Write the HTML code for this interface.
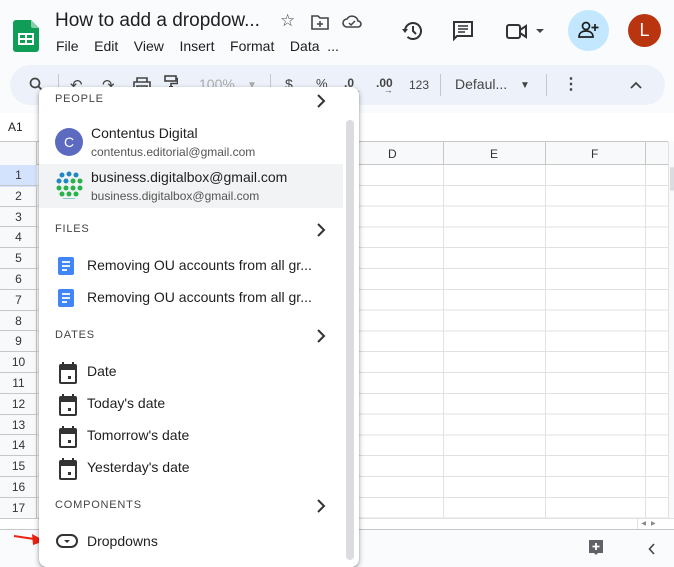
<!DOCTYPE html>
<html><head><meta charset="utf-8"><style>
*{margin:0;padding:0;box-sizing:border-box}
body{width:674px;height:565px;overflow:hidden;background:#f9fbfd;font-family:"Liberation Sans",Arial,sans-serif;position:relative;color:#1f1f1f}
.a{position:absolute}
.rh{position:absolute;left:0;width:37px;text-align:center;font-size:12px;color:#333;border-bottom:1px solid #c7c7c7}
.menu{position:absolute;left:39px;top:87px;width:320px;height:480px;background:#fff;border-radius:8px;box-shadow:0 2px 6px rgba(0,0,0,.3),0 1px 2px rgba(0,0,0,.2)}
.sec{position:absolute;left:16px;font-size:11px;letter-spacing:.8px;color:#444;font-weight:500}
.chev{position:absolute;left:276px;width:12px;height:14px}
.it{position:absolute;left:48px;font-size:14px;color:#1f1f1f;white-space:nowrap}
.tb{position:absolute;top:76px;font-size:13px;color:#444}
</style></head><body>
<svg class="a" style="left:13px;top:20px" width="26" height="32" viewBox="0 0 26 32"><path d="M0 3a3 3 0 0 1 3-3h15l8 8v21a3 3 0 0 1-3 3H3a3 3 0 0 1-3-3z" fill="#0f9d58"/><path d="M18 0l8 8h-6a2 2 0 0 1-2-2z" fill="#87ceac"/><rect x="5" y="13" width="16" height="12" fill="#fff"/><rect x="7" y="15" width="5" height="3" fill="#0f9d58"/><rect x="14" y="15" width="5" height="3" fill="#0f9d58"/><rect x="7" y="20" width="5" height="3" fill="#0f9d58"/><rect x="14" y="20" width="5" height="3" fill="#0f9d58"/></svg>
<div class="a" style="left:55px;top:10px;font-size:19px;color:#1f1f1f">How to add a dropdow...</div>
<div class="a" style="left:56px;top:38px;font-size:14px;color:#1f1f1f;word-spacing:0">File&nbsp;&nbsp;&nbsp;&nbsp;Edit&nbsp;&nbsp;&nbsp;&nbsp;View&nbsp;&nbsp;&nbsp;&nbsp;Insert&nbsp;&nbsp;&nbsp;&nbsp;Format&nbsp;&nbsp;&nbsp;&nbsp;Data&nbsp;&nbsp;...</div>
<div class="a" style="left:280px;top:11px;font-size:17px;color:#444">☆</div>
<svg class="a" style="left:311px;top:14px" width="18" height="16" viewBox="0 0 18 16"><path d="M1 2h6l2 2h8v11H1z" fill="none" stroke="#444" stroke-width="1.6"/><path d="M9 7v6M6 10h6" stroke="#444" stroke-width="1.5"/></svg>
<svg class="a" style="left:342px;top:14px" width="20" height="15" viewBox="0 0 20 15"><path d="M5 13a4 4 0 0 1 0-8 6 6 0 0 1 11 2 3 3 0 0 1 0 6z" fill="none" stroke="#444" stroke-width="1.6"/><path d="M7 9l2 2 4-4" fill="none" stroke="#444" stroke-width="1.5"/></svg>
<svg class="a" style="left:401px;top:19px" width="24" height="24" viewBox="0 0 24 24"><path d="M4 12a8 8 0 1 1 2.5 5.8" fill="none" stroke="#333" stroke-width="2"/><path d="M1 10l3 4 3-4z" fill="#333"/><path d="M12 7v5l3 3" fill="none" stroke="#333" stroke-width="2"/></svg>
<svg class="a" style="left:452px;top:20px" width="22" height="22" viewBox="0 0 22 22"><path d="M2 2h18v14H5l-3 3z" fill="none" stroke="#333" stroke-width="2"/><path d="M6 6h10M6 9h10M6 12h7" stroke="#333" stroke-width="1.6"/></svg>
<svg class="a" style="left:505px;top:21px" width="40" height="20" viewBox="0 0 40 20"><rect x="2" y="4" width="13" height="13" rx="2" fill="none" stroke="#333" stroke-width="2"/><path d="M15 9l6-4v11l-6-4" fill="none" stroke="#333" stroke-width="2"/><path d="M31 8l4 4 4-4z" fill="#444"/></svg>
<div class="a" style="left:568px;top:10px;width:41px;height:41px;border-radius:50%;background:#c2e7ff"></div>
<svg class="a" style="left:578px;top:20px" width="22" height="20" viewBox="0 0 22 20"><circle cx="8" cy="6" r="3.5" fill="none" stroke="#1f1f1f" stroke-width="1.7"/><path d="M1 17c0-4 3-6 7-6s7 2 7 6z" fill="none" stroke="#1f1f1f" stroke-width="1.7"/><path d="M17 4v7M13.5 7.5h7" stroke="#1f1f1f" stroke-width="1.7"/></svg>
<div class="a" style="left:628px;top:14px;width:33px;height:33px;border-radius:50%;background:#b9350f;color:#fff;font-size:18px;text-align:center;line-height:33px">L</div>
<div class="a" style="left:10px;top:65px;width:655px;height:40px;border-radius:20px;background:#edf2fa"></div>
<svg class="a" style="left:29px;top:77px" width="16" height="16" viewBox="0 0 16 16"><circle cx="6" cy="6" r="4.5" fill="none" stroke="#444" stroke-width="1.7"/><path d="M9.5 9.5l5 5" stroke="#444" stroke-width="1.8"/></svg>
<div class="a" style="left:58px;top:74px;width:1px;height:22px;background:#c7c7c7"></div>
<div class="tb" style="left:70px;font-size:15px">↶</div>
<div class="tb" style="left:102px;font-size:15px">↷</div>
<svg class="a" style="left:133px;top:77px" width="18" height="16" viewBox="0 0 18 16"><path d="M4 5V1h10v4M4 12H1V5h16v7h-3M4 9h10v6H4z" fill="none" stroke="#444" stroke-width="1.6"/></svg>
<svg class="a" style="left:164px;top:75px" width="14" height="20" viewBox="0 0 14 20"><rect x="1" y="1" width="11" height="5" fill="none" stroke="#444" stroke-width="1.6"/><path d="M12 3.5h1.5v5H7v3" fill="none" stroke="#444" stroke-width="1.6"/><rect x="5" y="11" width="4" height="8" fill="#444"/></svg>
<div class="tb" style="left:199px;color:#aaa;font-size:14px">100%</div>
<div class="tb" style="left:247px;color:#aaa;font-size:10px;top:80px">▼</div>
<div class="a" style="left:270px;top:74px;width:1px;height:22px;background:#c7c7c7"></div>
<div class="tb" style="left:285px;font-size:14px">$</div>
<div class="tb" style="left:316px;font-size:13px">%</div>
<div class="tb" style="left:344px;font-weight:bold;font-size:12px">.0<span style="font-size:9px;position:relative;top:6px;left:-2px">←</span></div>
<div class="tb" style="left:376px;font-weight:bold;font-size:12px">.00<span style="font-size:9px;position:relative;top:6px;left:-9px">→</span></div>
<div class="tb" style="left:409px;font-size:12px;top:78px">123</div>
<div class="a" style="left:440px;top:74px;width:1px;height:22px;background:#c7c7c7"></div>
<div class="tb" style="left:455px;font-size:14px">Defaul...</div>
<div class="tb" style="left:520px;font-size:10px;top:80px">▼</div>
<div class="a" style="left:546px;top:74px;width:1px;height:22px;background:#c7c7c7"></div>
<div class="tb" style="left:563px;font-size:16px;font-weight:bold;top:74px">⋮</div>
<svg class="a" style="left:630px;top:81px" width="12" height="8" viewBox="0 0 12 8"><path d="M1 7l5-5 5 5" fill="none" stroke="#444" stroke-width="1.8"/></svg>
<div class="a" style="left:0;top:113px;width:674px;height:28px;background:#fff"></div>
<div class="a" style="left:8px;top:120px;font-size:12px;color:#1f1f1f">A1</div>
<div class="a" style="left:0;top:141px;width:668px;height:378px;background:#fff;border-top:1px solid #c7c7c7"></div>
<div class="a" style="left:0;top:142px;width:668px;height:23px;background:#f8f9fa;border-bottom:1px solid #c7c7c7"></div>
<div class="a" style="left:0;top:142px;width:37px;height:376px;background:#f8f9fa;border-right:1px solid #c7c7c7"></div>
<div class="a" style="left:0;top:165px;width:37px;height:22px;background:#d3e3fd"></div>
<div class="a" style="left:37px;top:165px;width:631px;height:353px;background:repeating-linear-gradient(to bottom,transparent 0,transparent 19.8px,#e1e1e1 19.8px,#e1e1e1 20.8px)"></div>
<div class="a" style="left:443px;top:142px;width:1px;height:376px;background:#e1e1e1"></div>
<div class="a" style="left:545px;top:142px;width:1px;height:376px;background:#e1e1e1"></div>
<div class="a" style="left:645px;top:142px;width:1px;height:376px;background:#e1e1e1"></div>
<div class="a" style="left:443px;top:142px;width:1px;height:23px;background:#c7c7c7"></div>
<div class="a" style="left:545px;top:142px;width:1px;height:23px;background:#c7c7c7"></div>
<div class="a" style="left:645px;top:142px;width:1px;height:23px;background:#c7c7c7"></div>
<div class="a" style="left:388px;top:147px;font-size:12px;color:#333">D</div>
<div class="a" style="left:490px;top:147px;font-size:12px;color:#333">E</div>
<div class="a" style="left:591px;top:147px;font-size:12px;color:#333">F</div>
<div class="a" style="left:668px;top:142px;width:6px;height:376px;background:#f8f9fa;border-left:1px solid #e1e1e1"></div>
<div class="a" style="left:670px;top:167px;width:4px;height:24px;background:#dadce0;border-radius:2px"></div>
<div class="a" style="left:0;top:518px;width:674px;height:12px;background:#fff;border-top:1px solid #e1e1e1;border-bottom:1px solid #c7c7c7"></div>
<div class="a" style="left:637px;top:519px;width:32px;height:10px;border-left:1px solid #e1e1e1;font-size:6px;color:#888;line-height:10px">&nbsp;&nbsp;◀&nbsp;&nbsp;&nbsp;▶</div>
<div id="rows"></div>
<svg class="a" style="left:589px;top:540px" width="14" height="16" viewBox="0 0 14 16"><path d="M0 0h14v13H9l-2 2-2-2H0z" fill="#5f6368"/><path d="M7 3v7M3.5 6.5h7" stroke="#fff" stroke-width="1.8"/></svg>
<svg class="a" style="left:648px;top:543px" width="8" height="12" viewBox="0 0 8 12"><path d="M6 1L1.5 6 6 11" fill="none" stroke="#444" stroke-width="1.6"/></svg>
<svg class="a" style="left:14px;top:533px" width="32" height="14" viewBox="0 0 32 14"><path d="M0 3l20 3" stroke="#e21" stroke-width="2"/><path d="M31 8L18 1l1 11z" fill="#e21"/></svg>
<div class="menu">
 <div class="sec" style="top:6px">PEOPLE</div>
 <svg class="chev" style="top:7px" viewBox="0 0 12 14"><path d="M3 1l6 6-6 6" fill="none" stroke="#333" stroke-width="2"/></svg>
 <div class="a" style="left:307px;top:33px;width:8px;height:440px;background:#dadce0;border-radius:4px"></div>
 <div class="a" style="left:16px;top:41px;width:28px;height:28px;border-radius:50%;background:#5c6bc0;color:#fff;text-align:center;line-height:28px;font-size:14px">C</div>
 <div class="it" style="left:52px;top:38px">Contentus Digital</div>
 <div class="it" style="left:52px;top:58px;font-size:12px;color:#555">contentus.editorial@gmail.com</div>
 <div class="a" style="left:0;top:77px;width:304px;height:44px;background:#f1f3f4"></div>
 <svg class="a" style="left:16px;top:84px" width="28" height="30" viewBox="0 0 28 30"><g fill="#1e88c9"><circle cx="7" cy="4" r="2.5"/><circle cx="14" cy="3" r="2.5"/><circle cx="21" cy="4" r="2.5"/><circle cx="4" cy="10" r="2.5"/><circle cx="11" cy="10" r="2.5"/></g><g fill="#29b24a"><circle cx="18" cy="10" r="2.5"/><circle cx="25" cy="10" r="2.5"/><circle cx="4" cy="17" r="2.5"/><circle cx="11" cy="17" r="2.5"/><circle cx="18" cy="17" r="2.5"/><circle cx="25" cy="17" r="2.5"/><circle cx="7" cy="23" r="2.5"/><circle cx="14" cy="23" r="2.5"/><circle cx="21" cy="23" r="2.5"/></g><rect x="8" y="27" width="12" height="1" fill="#8cc"/></svg>
 <div class="it" style="left:52px;top:82px">business.digitalbox@gmail.com</div>
 <div class="it" style="left:52px;top:102px;font-size:12px;color:#555">business.digitalbox@gmail.com</div>
 <div class="sec" style="top:136px">FILES</div>
 <svg class="chev" style="top:136px" viewBox="0 0 12 14"><path d="M3 1l6 6-6 6" fill="none" stroke="#333" stroke-width="2"/></svg>
 <svg class="a" style="left:19px;top:170px" width="16" height="18" viewBox="0 0 16 18"><rect width="16" height="18" rx="2" fill="#4285f4"/><path d="M4 5h8M4 9h8M4 13h5" stroke="#fff" stroke-width="1.8"/></svg>
 <div class="it" style="top:170px">Removing OU accounts from all gr...</div>
 <svg class="a" style="left:19px;top:202px" width="16" height="18" viewBox="0 0 16 18"><rect width="16" height="18" rx="2" fill="#4285f4"/><path d="M4 5h8M4 9h8M4 13h5" stroke="#fff" stroke-width="1.8"/></svg>
 <div class="it" style="top:202px">Removing OU accounts from all gr...</div>
 <div class="sec" style="top:242px">DATES</div>
 <svg class="chev" style="top:242px" viewBox="0 0 12 14"><path d="M3 1l6 6-6 6" fill="none" stroke="#333" stroke-width="2"/></svg>
 <div id="cal"></div>
 <div class="sec" style="top:412px">COMPONENTS</div>
 <svg class="chev" style="top:412px" viewBox="0 0 12 14"><path d="M3 1l6 6-6 6" fill="none" stroke="#333" stroke-width="2"/></svg>
 <svg class="a" style="left:17px;top:446px" width="22" height="16" viewBox="0 0 22 16"><rect x="1" y="2" width="20" height="12" rx="6" fill="none" stroke="#333" stroke-width="2"/><path d="M8 7h6l-3 3z" fill="#333"/></svg>
 <div class="it" style="top:446px">Dropdowns</div>
</div>
<script>
var r='';for(var i=1;i<=17;i++){r+='<div class="rh" style="top:'+(165+(i-1)*20.8)+'px;height:20.8px;line-height:20px">'+i+'</div>';}
document.getElementById('rows').innerHTML=r;
var n=['Date',"Today's date","Tomorrow's date","Yesterday's date"],c='';
for(var j=0;j<4;j++){var t=276+j*32;c+='<svg class="a" style="left:20px;top:'+(t-1)+'px" width="18" height="22" viewBox="0 0 18 22"><path d="M4 0v3M14 0v3" stroke="#333" stroke-width="2"/><rect x="1" y="3" width="16" height="18" rx="1" fill="none" stroke="#333" stroke-width="2"/><rect x="1" y="3" width="16" height="5" fill="#333"/><rect x="9" y="14" width="3" height="3" fill="#333"/></svg><div class="it" style="top:'+t+'px">'+n[j]+'</div>';}
document.getElementById('cal').innerHTML=c;
</script>
</body></html>
